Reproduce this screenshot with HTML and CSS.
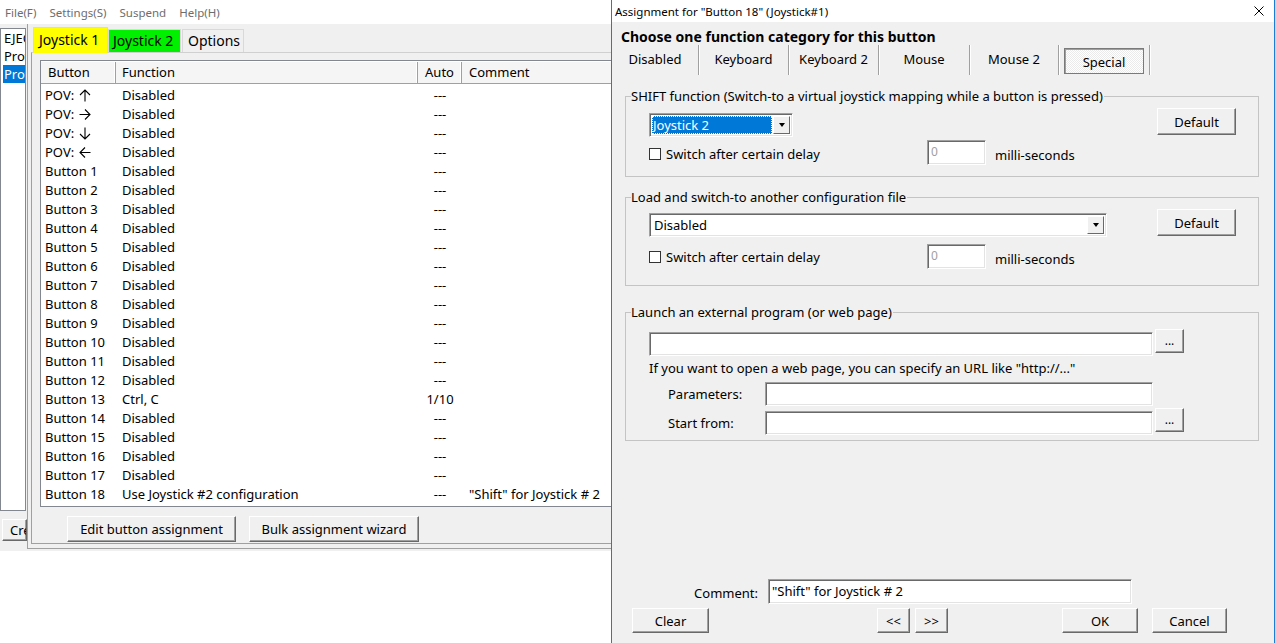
FILE: index.html
```html
<!DOCTYPE html>
<html lang="en">
<head>
  <meta charset="UTF-8">
  <title>Assignment for "Button 18" (Joystick#1)</title>
  <link rel="stylesheet" href="styles.css">
</head>
<body>
  <!-- Main window (behind) -->
  <div class="main-window">
    <div class="menubar">
      <span>File(F)</span>
      <span>Settings(S)</span>
      <span>Suspend</span>
      <span>Help(H)</span>
    </div>
    <div class="main-body">
      <div class="side">
        <ul class="profiles">
          <li>EJECT</li>
          <li>Profile1</li>
          <li class="selected">Profile2</li>
        </ul>
        <button class="btn create-btn">Create</button>
      </div>
      <div class="tabctl">
        <div class="tabs">
          <div class="tab tab-joy1 active">Joystick 1</div>
          <div class="tab tab-joy2">Joystick 2</div>
          <div class="tab tab-options">Options</div>
        </div>
        <div class="tabpanel">
          <div class="listview">
            <div class="lv-row lv-header">
              <div class="c-btn">Button</div>
              <div class="c-fn">Function</div>
              <div class="c-auto">Auto</div>
              <div class="c-cmt">Comment</div>
            </div>
            <div class="lv-body">
              <div class="lv-row"><div class="c-btn">POV: <svg class="arrow" width="12" height="13" viewBox="0 0 12 13"><path d="M6 12.5V1 M1 6 L6 1 L11 6" /></svg></div><div class="c-fn">Disabled</div><div class="c-auto">---</div><div class="c-cmt"></div></div>
              <div class="lv-row"><div class="c-btn">POV: <svg class="arrow" width="12" height="13" viewBox="0 0 12 13"><path d="M0.5 6.5H11 M6 1.5 L11 6.5 L6 11.5" /></svg></div><div class="c-fn">Disabled</div><div class="c-auto">---</div><div class="c-cmt"></div></div>
              <div class="lv-row"><div class="c-btn">POV: <svg class="arrow" width="12" height="13" viewBox="0 0 12 13"><path d="M6 0.5V12 M1 7 L6 12 L11 7" /></svg></div><div class="c-fn">Disabled</div><div class="c-auto">---</div><div class="c-cmt"></div></div>
              <div class="lv-row"><div class="c-btn">POV: <svg class="arrow" width="12" height="13" viewBox="0 0 12 13"><path d="M11.5 6.5H1 M6 1.5 L1 6.5 L6 11.5" /></svg></div><div class="c-fn">Disabled</div><div class="c-auto">---</div><div class="c-cmt"></div></div>
              <div class="lv-row"><div class="c-btn">Button 1</div><div class="c-fn">Disabled</div><div class="c-auto">---</div><div class="c-cmt"></div></div>
              <div class="lv-row"><div class="c-btn">Button 2</div><div class="c-fn">Disabled</div><div class="c-auto">---</div><div class="c-cmt"></div></div>
              <div class="lv-row"><div class="c-btn">Button 3</div><div class="c-fn">Disabled</div><div class="c-auto">---</div><div class="c-cmt"></div></div>
              <div class="lv-row"><div class="c-btn">Button 4</div><div class="c-fn">Disabled</div><div class="c-auto">---</div><div class="c-cmt"></div></div>
              <div class="lv-row"><div class="c-btn">Button 5</div><div class="c-fn">Disabled</div><div class="c-auto">---</div><div class="c-cmt"></div></div>
              <div class="lv-row"><div class="c-btn">Button 6</div><div class="c-fn">Disabled</div><div class="c-auto">---</div><div class="c-cmt"></div></div>
              <div class="lv-row"><div class="c-btn">Button 7</div><div class="c-fn">Disabled</div><div class="c-auto">---</div><div class="c-cmt"></div></div>
              <div class="lv-row"><div class="c-btn">Button 8</div><div class="c-fn">Disabled</div><div class="c-auto">---</div><div class="c-cmt"></div></div>
              <div class="lv-row"><div class="c-btn">Button 9</div><div class="c-fn">Disabled</div><div class="c-auto">---</div><div class="c-cmt"></div></div>
              <div class="lv-row"><div class="c-btn">Button 10</div><div class="c-fn">Disabled</div><div class="c-auto">---</div><div class="c-cmt"></div></div>
              <div class="lv-row"><div class="c-btn">Button 11</div><div class="c-fn">Disabled</div><div class="c-auto">---</div><div class="c-cmt"></div></div>
              <div class="lv-row"><div class="c-btn">Button 12</div><div class="c-fn">Disabled</div><div class="c-auto">---</div><div class="c-cmt"></div></div>
              <div class="lv-row"><div class="c-btn">Button 13</div><div class="c-fn">Ctrl, C</div><div class="c-auto">1/10</div><div class="c-cmt"></div></div>
              <div class="lv-row"><div class="c-btn">Button 14</div><div class="c-fn">Disabled</div><div class="c-auto">---</div><div class="c-cmt"></div></div>
              <div class="lv-row"><div class="c-btn">Button 15</div><div class="c-fn">Disabled</div><div class="c-auto">---</div><div class="c-cmt"></div></div>
              <div class="lv-row"><div class="c-btn">Button 16</div><div class="c-fn">Disabled</div><div class="c-auto">---</div><div class="c-cmt"></div></div>
              <div class="lv-row"><div class="c-btn">Button 17</div><div class="c-fn">Disabled</div><div class="c-auto">---</div><div class="c-cmt"></div></div>
              <div class="lv-row"><div class="c-btn">Button 18</div><div class="c-fn">Use Joystick #2 configuration</div><div class="c-auto">---</div><div class="c-cmt">"Shift" for Joystick # 2</div></div>
            </div>
          </div>
          <div class="actions">
            <button class="btn btn-edit">Edit button assignment</button>
            <button class="btn btn-bulk">Bulk assignment wizard</button>
          </div>
        </div>
      </div>
    </div>
  </div>

  <!-- Assignment dialog (front) -->
  <div class="dialog">
    <div class="titlebar">
      <span class="title">Assignment for "Button 18" (Joystick#1)</span>
      <svg class="close" width="10" height="10" viewBox="0 0 10 10">
        <path d="M0.5 0.5 L9.5 9.5 M9.5 0.5 L0.5 9.5" stroke="#000" stroke-width="1" fill="none"/>
      </svg>
    </div>

    <div class="heading">Choose one function category for this button</div>
    <div class="cats">
      <div class="cat cat-first">Disabled</div>
      <div class="cat">Keyboard</div>
      <div class="cat">Keyboard 2</div>
      <div class="cat cat-wide">Mouse</div>
      <div class="cat cat-narrow">Mouse 2</div>
      <div class="cat cat-wide"><span class="cat-pressed">Special</span></div>
    </div>

    <fieldset class="group group-shift">
      <legend>SHIFT function (Switch-to a virtual joystick mapping while a button is pressed)</legend>
      <div class="g-row">
        <div class="select select-joy">
          <span class="sel-value highlighted">Joystick 2</span>
          <span class="sel-arrow"><i></i></span>
        </div>
        <button class="btn btn-default">Default</button>
      </div>
      <div class="g-row2">
        <label class="chk-label"><span class="chk"></span>Switch after certain delay</label>
        <div class="field num">0</div>
        <span class="unit">milli-seconds</span>
      </div>
    </fieldset>

    <fieldset class="group group-load">
      <legend>Load and switch-to another configuration file</legend>
      <div class="g-row">
        <div class="select select-cfg">
          <span class="sel-value">Disabled</span>
          <span class="sel-arrow"><i></i></span>
        </div>
        <button class="btn btn-default">Default</button>
      </div>
      <div class="g-row2">
        <label class="chk-label"><span class="chk"></span>Switch after certain delay</label>
        <div class="field num">0</div>
        <span class="unit">milli-seconds</span>
      </div>
    </fieldset>

    <fieldset class="group group-launch">
      <legend>Launch an external program (or web page)</legend>
      <div class="l-row">
        <div class="field prog"></div>
        <button class="btn btn-dots">...</button>
      </div>
      <div class="hint">If you want to open a web page, you can specify an URL like "http://..."</div>
      <div class="l-row l-params">
        <span class="l-label">Parameters:</span>
        <div class="field wide"></div>
      </div>
      <div class="l-row l-start">
        <span class="l-label">Start from:</span>
        <div class="field wide"></div>
        <button class="btn btn-dots">...</button>
      </div>
    </fieldset>

    <div class="footer">
      <div class="comment-row">
        <span class="comment-label">Comment:</span>
        <div class="field comment">"Shift" for Joystick # 2</div>
      </div>
      <div class="button-row">
        <button class="btn btn-clear">Clear</button>
        <button class="btn btn-prev">&lt;&lt;</button>
        <button class="btn btn-next">&gt;&gt;</button>
        <button class="btn btn-ok">OK</button>
        <button class="btn btn-cancel">Cancel</button>
      </div>
    </div>
  </div>
</body>
</html>
```

FILE: styles.css
```css
* {
  box-sizing: border-box;
}
body {
  margin: 0;
  width: 1275px;
  height: 643px;
  overflow: hidden;
  position: relative;
  background: #fff;
  font-family: "Noto Sans", "Open Sans", sans-serif;
  font-size: 13px;
  color: #000;
}

/* classic 3D push button */
.btn {
  font-family: inherit;
  font-size: 13px;
  color: #000;
  background: #f0f0f0;
  border: 1px solid;
  border-color: #fff #696969 #696969 #fff;
  box-shadow: inset -1px -1px 0 #a0a0a0;
  padding: 0;
  margin: 0;
  text-align: center;
  white-space: nowrap;
}

/* sunken edit field */
.field {
  background: #fff;
  border: 1px solid;
  border-color: #a0a0a0 #fff #fff #a0a0a0;
  box-shadow: inset 1px 1px 0 #696969, inset -1px -1px 0 #e3e3e3;
  height: 25px;
}

/* ---------- main window ---------- */
.main-window {
  position: absolute;
  left: 0;
  top: 0;
  width: 660px;
  height: 551px;
}
.menubar {
  height: 24px;
  background: #fff;
  display: flex;
  align-items: center;
  gap: 13px;
  padding-left: 5px;
  font-size: 11.5px;
  color: #6d6d6d;
}
.main-body {
  height: 527px;
  background: #f0f0f0;
  display: flex;
}
.side {
  width: 27px;
  padding-top: 4px;
  flex-shrink: 0;
}
.profiles {
  list-style: none;
  margin: 0;
  padding: 0 0 0 2px;
  width: 26px;
  height: 483px;
  background: #fff;
  border: 1px solid #828790;
  overflow: hidden;
}
.profiles li {
  height: 18px;
  line-height: 18px;
  white-space: nowrap;
  padding-left: 1px;
}
.profiles li.selected {
  background: #0078d7;
  color: #fff;
}
.create-btn {
  display: block;
  margin: 8px 0 0 2px;
  width: 25px;
  height: 22px;
  overflow: hidden;
  text-align: left;
  padding-left: 7px;
}

.tabctl {
  height: 525px;
  flex: 1;
  border-left: 1px solid #a0a0a0;
  border-bottom: 1px solid #a0a0a0;
  padding: 3px 0 0 3px;
}
.tabs {
  height: 25px;
  display: flex;
  align-items: flex-end;
  padding-left: 2px;
}
.tab {
  height: 23px;
  line-height: 21px;
  padding-left: 5px;
  font-size: 14px;
  border: 1px solid #d9d9d9;
  border-bottom: none;
  background: #f0f0f0;
}
.tab.active {
  height: 26px;
  line-height: 24px;
  margin-bottom: -1px;
  position: relative;
  z-index: 1;
}
.tab-joy1 {
  width: 75px;
  background: #ffff00;
}
.tab-joy2 {
  width: 73px;
  padding-left: 4px;
  background: #00f000;
}
.tab-options {
  width: 62px;
  margin-left: 1px;
}
.tabpanel {
  height: 492px;
  border: 1px solid #a0a0a0;
  border-top-color: #d0d0d0;
  border-right: none;
  padding: 7px 0 0 8px;
}
.listview {
  width: 640px;
  height: 447px;
  background: #fff;
  border: 1px solid #828790;
  overflow: hidden;
}
.lv-row {
  display: flex;
  height: 19px;
  line-height: 19px;
  white-space: nowrap;
}
.lv-row .c-btn {
  width: 75px;
  padding-left: 4px;
}
.lv-row .c-fn {
  width: 302px;
  padding-left: 6px;
}
.lv-row .c-auto {
  width: 44px;
  text-align: center;
}
.lv-row .c-cmt {
  flex: 1;
  padding-left: 7px;
}
.lv-header {
  height: 23px;
  line-height: 21px;
  background: #f5f5f5;
  border-top: 1px solid #fff;
  border-bottom: 1px solid #a0a0a0;
}
.lv-header > div {
  border-right: 1px solid #a0a0a0;
  box-shadow: inset -1px 0 0 #fff;
}
.lv-header .c-btn {
  padding-left: 7px;
}
.lv-header .c-cmt {
  border-right: none;
}
.lv-body {
  padding-top: 2px;
}
.arrow {
  vertical-align: -2px;
  margin-left: 1px;
  fill: none;
  stroke: #000;
  stroke-width: 1.1;
}
.actions {
  display: flex;
  margin-top: 9px;
  padding-left: 27px;
}
.actions .btn {
  height: 26px;
}
.btn-edit {
  width: 169px;
}
.btn-bulk {
  width: 170px;
  margin-left: 13px;
}

/* ---------- dialog ---------- */
.dialog {
  position: absolute;
  left: 611px;
  top: 0;
  width: 664px;
  height: 643px;
  background: #f0f0f0;
  border-left: 1px solid #1a7fd4;
  border-right: 1px solid #1a7fd4;
  display: flex;
  flex-direction: column;
  z-index: 2;
}
.titlebar {
  height: 22px;
  flex-shrink: 0;
  background: #fff;
  display: flex;
  align-items: center;
  padding-left: 3px;
  font-size: 11.5px;
}
.close {
  margin-left: auto;
  margin-right: 10px;
}
.heading {
  margin: 6px 0 0 9px;
  font-size: 14px;
  font-weight: bold;
  line-height: 18px;
}
.cats {
  display: flex;
  height: 30px;
  margin-top: -1px;
  flex-shrink: 0;
}
.cat {
  width: 90px;
  line-height: 29px;
  text-align: center;
  border-right: 1px solid #a0a0a0;
  box-shadow: 1px 0 0 #fff;
}
.cat-first {
  width: 87px;
}
.cat-wide {
  width: 91px;
}
.cat-narrow {
  width: 89px;
}
.cat-pressed {
  display: block;
  margin: 3px 5px 0;
  height: 26px;
  line-height: 25px;
  padding-top: 1px;
  border: 1px solid #7a7a7a;
  box-shadow: inset 1px 1px 0 #a0a0a0;
  background: repeating-conic-gradient(#fff 0 25%, #ebebeb 0 50%) 0 0 / 2px 2px;
}

.group {
  margin: 12px 0 0 13px;
  width: 634px;
  border: 1px solid #c4c4c4;
  padding: 3px 22px 11px 23px;
  flex-shrink: 0;
  min-width: 0;
}
.group legend {
  margin-left: -18px;
  padding: 0 1px 0 0;
  line-height: 18px;
}
.group-load {
  margin-top: 11px;
  padding-bottom: 16px;
}
.group-launch {
  margin-top: 17px;
  padding-top: 8px;
  padding-bottom: 5px;
}
.g-row {
  display: flex;
  justify-content: space-between;
  align-items: flex-start;
  height: 28px;
}
.btn-default {
  width: 79px;
  height: 27px;
}
.select {
  display: flex;
  height: 24px;
  background: #fff;
  border: 1px solid;
  border-color: #a0a0a0 #fff #fff #a0a0a0;
  box-shadow: inset 1px 1px 0 #696969, inset -1px -1px 0 #e3e3e3;
  padding: 2px;
}
.select-joy {
  width: 144px;
  margin-top: 5px;
}
.select-cfg {
  width: 458px;
  margin-top: 4px;
}
.sel-value {
  flex: 1;
  line-height: 18px;
  padding-left: 2px;
  white-space: nowrap;
}
.sel-value.highlighted {
  background: #0078d7;
  color: #fff;
  outline: 1px dotted #fff;
  outline-offset: -1px;
  padding-left: 1px;
}
.sel-arrow {
  width: 17px;
  margin-left: 1px;
  background: #f0f0f0;
  border: 1px solid;
  border-color: #fff #696969 #696969 #fff;
  display: flex;
  align-items: center;
  justify-content: center;
}
.sel-arrow i {
  width: 0;
  height: 0;
  border-left: 3.5px solid transparent;
  border-right: 3.5px solid transparent;
  border-top: 4px solid #000;
}
.g-row2 {
  display: flex;
  align-items: center;
  height: 25px;
  margin-top: 4px;
}
.group-load .g-row2 {
  margin-top: 7px;
}
.chk-label {
  width: 278px;
  display: flex;
  align-items: center;
  gap: 5px;
  padding-top: 2px;
}
.group-load .chk-label {
  padding-top: 1px;
}
.chk {
  width: 12px;
  height: 12px;
  background: #fff;
  border: 1px solid #333;
}
.num {
  width: 59px;
  font-size: 12px;
  color: #a0a0a0;
  padding-left: 3px;
  line-height: 21px;
}
.unit {
  margin-left: 9px;
  padding-top: 5px;
}

.l-row {
  display: flex;
  align-items: flex-start;
  height: 27px;
}
.prog {
  width: 504px;
  height: 24px;
  margin-top: 3px;
}
.btn-dots {
  width: 29px;
  height: 24px;
  margin-left: 2px;
  font-size: 12px;
  line-height: 16px;
}
.hint {
  margin-top: 3px;
  line-height: 18px;
}
.l-params {
  margin-top: 5px;
  height: 24px;
}
.l-params .l-label {
  line-height: 24px;
}
.l-start {
  margin-top: 2px;
}
.l-start .l-label,
.l-start .field {
  margin-top: 3px;
  line-height: 24px;
}
.l-label {
  width: 116px;
  padding-left: 19px;
}
.wide {
  width: 388px;
  height: 24px;
}

.footer {
  margin-top: auto;
  padding-bottom: 10px;
}
.comment-row {
  display: flex;
  align-items: center;
  height: 25px;
  margin-bottom: 4px;
}
.comment-label {
  width: 146px;
  text-align: right;
  margin-right: 10px;
  padding-top: 2px;
}
.comment {
  width: 364px;
  line-height: 23px;
  padding-left: 3px;
}
.button-row {
  display: flex;
  height: 25px;
}
.button-row .btn {
  height: 25px;
}
.btn-clear {
  width: 77px;
  margin-left: 20px;
}
.btn-prev {
  width: 33px;
  margin-left: 168px;
}
.btn-next {
  width: 33px;
  margin-left: 5px;
}
.btn-ok {
  width: 76px;
  margin-left: 114px;
}
.btn-cancel {
  width: 75px;
  margin-left: 14px;
}
```
